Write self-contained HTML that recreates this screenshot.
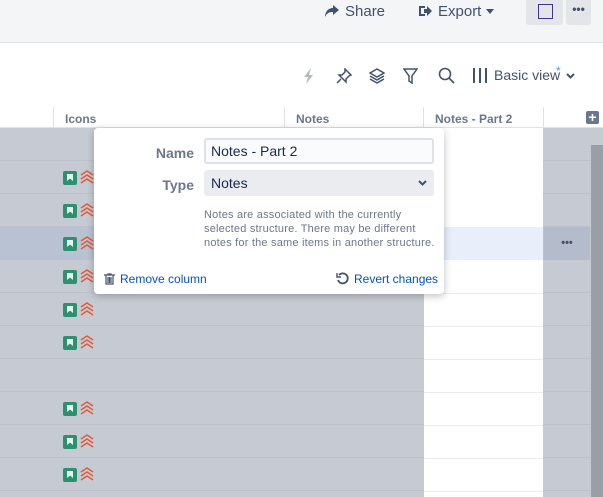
<!DOCTYPE html><html><head><style>
body{margin:0;width:603px;height:497px;overflow:hidden;font-family:"Liberation Sans",sans-serif;background:#fff;position:relative}
.a{position:absolute}
.top{left:0;top:0;width:603px;height:42px;background:#f4f5f7;border-bottom:1px solid #e1e3e7}
.t{color:#42526e;font-size:15px}
.hd{top:107px;height:21px;font-size:12px;font-weight:bold;color:#6b778c}
.g{background:#c6cad2}
.row{position:absolute;left:0;width:590px;height:32px;border-bottom:1px solid #bcc0c8}
.ic{position:absolute;left:63px;width:14px;height:14px;background:#2f8f6f;border-radius:2px}
.ic:after{content:"";position:absolute;left:4px;top:3px;width:6px;height:7px;background:#dfe;clip-path:polygon(0 0,100% 0,100% 100%,50% 65%,0 100%)}
.ch{position:absolute;left:80px;width:14px;height:14px}
.pop{left:94px;top:128px;width:350px;height:166px;background:#fff;border-radius:4px;box-shadow:0 2px 8px rgba(0,0,0,.25)}
</style></head><body>
<div class="a top"></div>
<svg class="a" style="left:324px;top:4px" width="16" height="14" viewBox="0 0 16 14"><path d="M9 1l6 5-6 5V8C5 8 3 9 1 13 1 8 4 4 9 4z" fill="#42526e"/></svg>
<div class="a t" style="left:345px;top:3px">Share</div>
<svg class="a" style="left:418px;top:5px" width="14" height="12" viewBox="0 0 14 12"><path d="M1 1h6v2H3v6h4v2H1z M6 4h3V1l5 5-5 5V8H6z" fill="#42526e"/></svg>
<div class="a t" style="left:438px;top:3px">Export</div>
<div class="a" style="left:486px;top:9px;border:4px solid transparent;border-top:5px solid #42526e"></div>
<div class="a" style="left:526px;top:0;width:37px;height:25px;background:#e4e5e9;border-radius:0 0 3px 3px"></div>
<div class="a" style="left:538px;top:4px;width:13px;height:13px;border:1.5px solid #403294"></div>
<div class="a" style="left:566px;top:0;width:25px;height:25px;background:#e4e5e9;border-radius:0 0 3px 3px;text-align:center;font-weight:bold;color:#42526e;font-size:12px;line-height:18px">•••</div>
<svg class="a" style="left:303px;top:68px" width="12" height="16" viewBox="0 0 12 16"><path d="M8 0L1 9h4l-2 7 7-9H6z" fill="#b3b9c4"/></svg>
<svg class="a" style="left:336px;top:68px" width="16" height="16" viewBox="0 0 16 16" fill="none" stroke="#42526e" stroke-width="1.5"><path d="M9 1l6 6-2 1-3 3 0 3-7-7 3 0 3-3z M5 11l-4 4"/></svg>
<svg class="a" style="left:369px;top:68px" width="16" height="16" viewBox="0 0 16 16" fill="none" stroke="#42526e" stroke-width="1.5"><path d="M8 1l7 4-7 4-7-4z M1 8l7 4 7-4 M1 11l7 4 7-4"/></svg>
<svg class="a" style="left:403px;top:68px" width="15" height="16" viewBox="0 0 15 16" fill="none" stroke="#42526e" stroke-width="1.5"><path d="M1 1h13l-5 7v7l-3-2V8z"/></svg>
<svg class="a" style="left:438px;top:67px" width="17" height="17" viewBox="0 0 17 17" fill="none" stroke="#42526e" stroke-width="1.6"><circle cx="7" cy="7" r="5.5"/><path d="M11 11l5 5"/></svg>
<svg class="a" style="left:473px;top:68px" width="14" height="15" viewBox="0 0 14 15"><path d="M1 0v15M7 0v15M13 0v15" stroke="#42526e" stroke-width="2"/></svg>
<div class="a t" style="left:494px;top:67px;font-size:14px">Basic view</div>
<div class="a" style="left:556px;top:64px;color:#4c9aff;font-size:12px">*</div>
<svg class="a" style="left:566px;top:73px" width="9" height="6" viewBox="0 0 9 6"><path d="M1 1l3.5 3.5L8 1" stroke="#42526e" stroke-width="2" fill="none"/></svg>
<div class="a" style="left:0;top:127px;width:603px;height:1px;background:#dfe1e6"></div>
<div class="a" style="left:53px;top:107px;width:1px;height:21px;background:#dfe1e6"></div>
<div class="a" style="left:284px;top:107px;width:1px;height:21px;background:#dfe1e6"></div>
<div class="a" style="left:423px;top:107px;width:1px;height:21px;background:#dfe1e6"></div>
<div class="a" style="left:543px;top:107px;width:1px;height:21px;background:#dfe1e6"></div>
<div class="a hd" style="left:65px;top:112px">Icons</div>
<div class="a hd" style="left:296px;top:112px">Notes</div>
<div class="a hd" style="left:435px;top:112px">Notes - Part 2</div>
<div class="a" style="left:586px;top:111px;width:13px;height:13px;background:#6b778c;border-radius:2px;color:#fff;font-size:14px;line-height:13px;text-align:center;font-weight:bold">+</div>
<div class="a g" style="left:0;top:128px;width:590px;height:369px"></div>
<div class="a" style="left:590px;top:128px;width:13px;height:369px;background:#c6cad2"></div>
<div class="a" style="left:591px;top:145px;width:12px;height:352px;background:#9a9ea6"></div>
<div class="row" style="top:128px"></div><div class="row" style="top:161px"></div><div class="row" style="top:194px"></div>
<div class="row" style="top:227px;background:#b9c2d3"></div>
<div class="row" style="top:260px"></div><div class="row" style="top:293px"></div><div class="row" style="top:326px"></div><div class="row" style="top:359px"></div><div class="row" style="top:392px"></div><div class="row" style="top:425px"></div><div class="row" style="top:458px"></div>
<div class="a" style="left:424px;top:128px;width:119px;height:369px;background:#fff"></div>
<div class="a" style="left:424px;top:227px;width:119px;height:33px;background:#e8effa"></div>
<div class="a" style="left:424px;top:293px;width:119px;height:1px;background:#ebecf0"></div>
<div class="a" style="left:424px;top:326px;width:119px;height:1px;background:#ebecf0"></div>
<div class="a" style="left:424px;top:359px;width:119px;height:1px;background:#ebecf0"></div>
<div class="a" style="left:424px;top:392px;width:119px;height:1px;background:#ebecf0"></div>
<div class="a" style="left:424px;top:425px;width:119px;height:1px;background:#ebecf0"></div>
<div class="a" style="left:424px;top:458px;width:119px;height:1px;background:#ebecf0"></div>
<div class="a" style="left:424px;top:491px;width:119px;height:1px;background:#ebecf0"></div>
<div class="a" style="left:544px;top:227px;width:46px;height:33px;background:#b4bccc;text-align:center;font-size:11px;font-weight:bold;color:#42526e;line-height:33px">•••</div>
<div id="icons"></div>
<script>
var ys=[161,194,227,260,293,326,392,425,458],h='';
ys.forEach(function(y){h+='<div class="ic" style="top:'+(y+10)+'px"></div><svg class="ch" style="top:'+(y+9)+'px" viewBox="0 0 14 14" fill="none" stroke="#de5b3d" stroke-width="1.5"><path d="M1 5l6-4 6 4M1 9l6-4 6 4M1 13l6-4 6 4"/></svg>';});
document.getElementById('icons').innerHTML=h;
</script>
<div class="a pop">
<div class="a" style="left:0;width:100px;text-align:right;top:17px;color:#6b778c;font-size:14px;font-weight:bold">Name</div>
<div class="a" style="left:110px;top:10px;height:22px;border:2px solid #dfe1e6;border-radius:3px;background:#fafbfc;font-size:14px;color:#172b4d;line-height:22px;padding-left:5px;width:221px">Notes - Part 2</div>
<div class="a" style="left:0;width:100px;text-align:right;top:49px;color:#6b778c;font-size:14px;font-weight:bold">Type</div>
<div class="a" style="left:110px;top:42px;width:230px;height:26px;background:#ebecf0;border-radius:3px;font-size:14px;color:#172b4d;line-height:26px;padding-left:7px;box-sizing:border-box">Notes</div>
<svg class="a" style="left:324px;top:52px" width="9" height="6" viewBox="0 0 9 6"><path d="M1 1l3.5 3.5L8 1" stroke="#42526e" stroke-width="2" fill="none"/></svg>
<div class="a" style="left:110px;top:80px;white-space:nowrap;font-size:11px;letter-spacing:0.2px;line-height:14px;color:#6b778c">Notes are associated with the currently<br>selected structure. There may be different<br>notes for the same items in another structure.</div>
<svg class="a" style="left:10px;top:145px" width="11" height="12" viewBox="0 0 11 12" fill="none" stroke="#42526e" stroke-width="1.2"><path d="M0 2h11M4 2V1h3v1M2 2v9h7V2M4 4v6M5.5 4v6M7 4v6"/></svg>
<div class="a" style="left:26px;top:144px;font-size:12px;color:#0052cc">Remove column</div>
<svg class="a" style="left:242px;top:144px" width="13" height="13" viewBox="0 0 13 13" fill="none" stroke="#42526e" stroke-width="1.8"><path d="M3 3a5 5 0 1 1-1 5"/><path d="M1 1v4h4" stroke-width="1.4"/></svg>
<div class="a" style="left:260px;top:144px;font-size:12px;color:#0052cc">Revert changes</div>
</div>
</body></html>
